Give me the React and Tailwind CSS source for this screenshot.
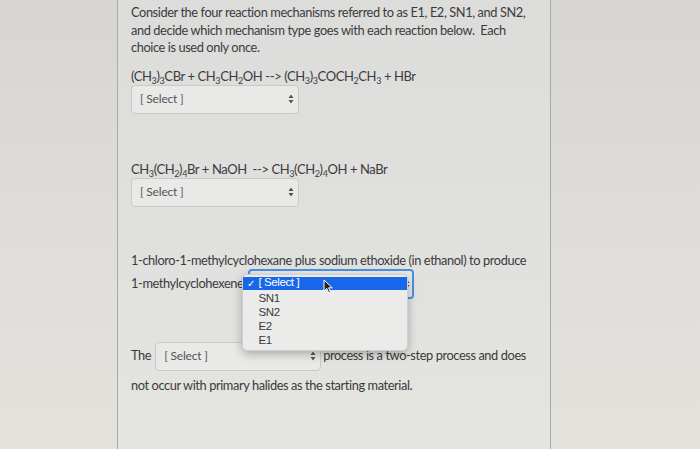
import React from 'react';

const Sub = ({ children }) => <sub className="text-[9px] align-baseline relative top-[3px]">{children}</sub>;

const Arrows = () => (
  <svg width="6" height="10" viewBox="0 0 6 10" className="shrink-0">
    <path d="M3 0.5 L5.5 4 L0.5 4 Z" fill="#555" />
    <path d="M3 9.5 L5.5 6 L0.5 6 Z" fill="#555" />
  </svg>
);

const SelectBox = ({ className = '' }) => (
  <div
    className={`flex items-center justify-between h-[29px] pl-[8px] rounded-[4px] border border-[#c9c9c7] bg-[#e9e9e7] text-[12px] tracking-[-0.2px] text-[#555] ${className}`}
  >
    <span>[ Select ]</span>
    <Arrows />
  </div>
);

const Cursor = () => (
  <svg width="11" height="15" viewBox="0 0 11 15" className="absolute left-[80px] top-[2px]">
    <path d="M1 1 L1 12 L3.8 9.4 L5.8 14 L7.5 13.2 L5.6 8.8 L9.3 8.8 Z" fill="#222" stroke="#fff" strokeWidth="1" />
  </svg>
);

const Menu = () => (
  <div className="absolute left-[-6px] top-[5px] w-[166px] h-[77px] rounded-[5px] bg-[#ebebea] shadow-[0_3px_10px_rgba(0,0,0,0.28)] border border-[#cfcfcf] py-[2px] font-['Liberation_Sans',sans-serif] text-[11.5px] text-[#3a3a3a] z-10">
    <div className="relative flex items-center h-[13px] bg-[#1866ea] text-white">
      <span className="w-[14px] pl-[4px] text-[10px]">✓</span>
      <span className="pl-[1px]">[ Select ]</span>
      <Cursor />
    </div>
    <div className="h-[14px] leading-[14px] pl-[15px] mt-[1px]">SN1</div>
    <div className="h-[14px] leading-[14px] pl-[15px]">SN2</div>
    <div className="h-[14px] leading-[14px] pl-[15px]">E2</div>
    <div className="h-[14px] leading-[14px] pl-[15px]">E1</div>
  </div>
);

export default function App() {
  return (
    <div className="w-[700px] h-[449px] overflow-hidden bg-gradient-to-b from-[#d6d5d4] via-[#dedddb] to-[#e3e2dc] font-['Lato',sans-serif] text-[#3b3b3b]">
      <div className="ml-[117px] w-[434px] h-full border-l border-r border-[#a9a9a8] bg-gradient-to-b from-[#dcdcdb] to-[#e4e4e1] pl-[13px] pr-[10px] pt-[4px]">
        <p className="text-[12.8px] leading-[17.5px] tracking-[-0.4px]">
          Consider the four reaction mechanisms referred to as E1, E2, SN1, and SN2, and decide which mechanism type goes with each reaction below.&nbsp; Each choice is used only once.
        </p>

        <div className="mt-[11px] text-[13px] leading-[17px] tracking-[-0.4px]">
          (CH<Sub>3</Sub>)<Sub>3</Sub>CBr + CH<Sub>3</Sub>CH<Sub>2</Sub>OH --&gt; (CH<Sub>3</Sub>)<Sub>3</Sub>COCH<Sub>2</Sub>CH<Sub>3</Sub> + HBr
        </div>
        <SelectBox className="w-[168px] pr-[4px]" />

        <div className="mt-[47px] text-[13px] leading-[17px] tracking-[-0.4px]">
          CH<Sub>3</Sub>(CH<Sub>2</Sub>)<Sub>4</Sub>Br + NaOH&nbsp; --&gt; CH<Sub>3</Sub>(CH<Sub>2</Sub>)<Sub>4</Sub>OH + NaBr
        </div>
        <SelectBox className="w-[168px] pr-[4px]" />

        <div className="mt-[45px] text-[12.8px] leading-[17px] tracking-[-0.4px]">
          1-chloro-1-methylcyclohexane plus sodium ethoxide (in ethanol) to produce
        </div>
        <div className="flex items-center text-[12.8px] tracking-[-0.4px]">
          <span>1-methylcyclohexene</span>
          <div className="relative ml-[5px]">
            <div className="flex items-center justify-end w-[166px] h-[30px] rounded-[4px] border-2 border-[#4a90e2] bg-[#e9e9e7] pr-[2px]">
              <Arrows />
            </div>
            <Menu />
          </div>
        </div>

        <div className="mt-[43px] flex items-center text-[12.8px] tracking-[-0.4px]">
          <span className="mr-[4px]">The</span>
          <SelectBox className="w-[166px] pr-[4px]" />
          <span className="ml-[2px]">process is a two-step process and does</span>
        </div>
        <div className="mt-[6px] text-[12.8px] leading-[17px] tracking-[-0.4px]">
          not occur with primary halides as the starting material.
        </div>
      </div>
    </div>
  );
}
